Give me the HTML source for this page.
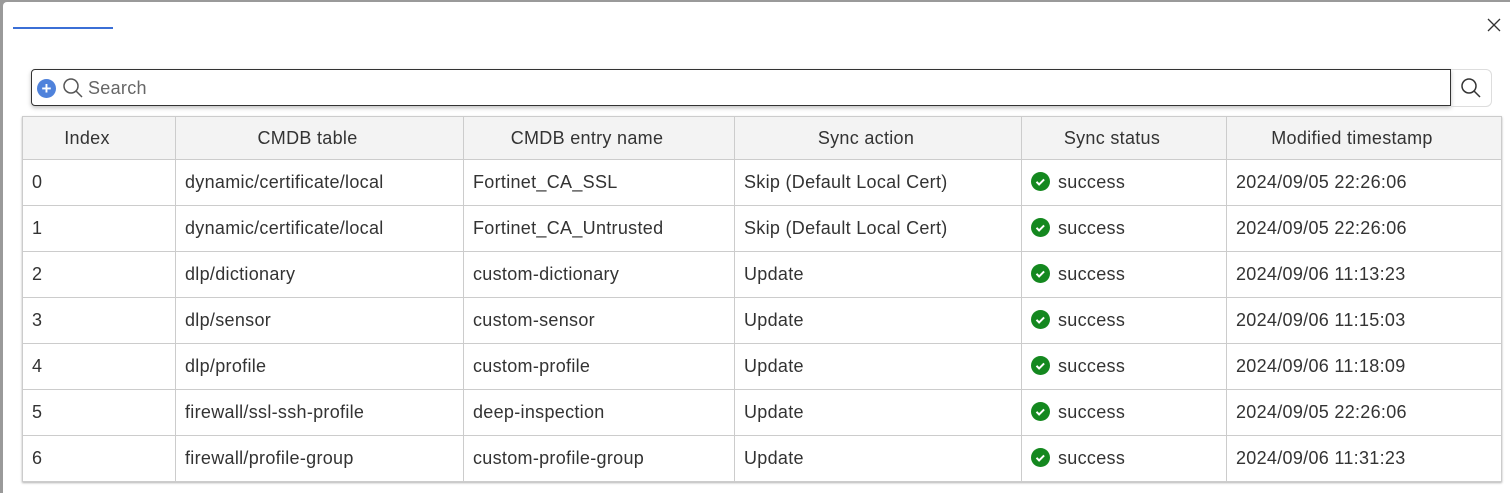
<!DOCTYPE html>
<html><head><style>
body{margin:0;width:1510px;height:493px;background:#9a9a9a;font-family:"Liberation Sans",sans-serif;overflow:hidden;position:relative}
.dlg{position:absolute;left:3px;top:2px;width:1507px;height:491px;background:#fff;border-top-left-radius:4px}
.tab{position:absolute;left:10px;top:25px;width:100px;height:2px;background:#3b6fd6}
.search{position:absolute;left:31px;top:69px;width:1418px;height:35px;border:1px solid #333;border-radius:4px 0 0 4px;box-shadow:0 2px 4px rgba(0,0,0,.25);background:#fff}
.plus{position:absolute;left:5px;top:9px;width:19px;height:19px;border-radius:50%;background:#4f82db;color:#fff;font-size:17px;line-height:19px;text-align:center;font-weight:bold}
.ph{position:absolute;left:56px;top:8px;font-size:18px;letter-spacing:.3px;color:#666}
.btn{position:absolute;left:1451px;top:69px;width:40px;height:36px;border:1px solid #ddd;border-left:none;border-radius:0 6px 6px 0}
table{position:absolute;left:22px;top:116px;border-collapse:collapse;font-size:18px;letter-spacing:.3px;color:#333;box-shadow:0 1px 2px rgba(0,0,0,.3);table-layout:fixed}
td,th{border:1px solid #ccc;padding:0 0 0 9px;text-align:left;font-weight:normal;height:45px;white-space:nowrap}
th{text-align:center;padding:0 24px 0 0;background:#f3f3f3;height:42px}
tr.b td{border-top:1px solid #999}
.ok{display:inline-block;width:19px;height:19px;border-radius:50%;background:#14881f;vertical-align:-3px;margin-right:8px;position:relative}
</style></head><body>
<div class="dlg">
<div class="tab"></div>
<svg style="position:absolute;left:1484px;top:16px" width="14" height="14"><path d="M1 1L13 13M13 1L1 13" stroke="#333" stroke-width="1.3"/></svg>
</div>
<div class="search"><div class="plus">+</div>
<svg style="position:absolute;left:30px;top:7px" width="22" height="22" viewBox="0 0 22 22"><circle cx="9" cy="9" r="7" fill="none" stroke="#555" stroke-width="1.5"/><line x1="14" y1="14" x2="20" y2="20" stroke="#555" stroke-width="1.5"/></svg>
<div class="ph">Search</div></div>
<div class="btn"><svg style="position:absolute;left:9px;top:7px" width="22" height="22" viewBox="0 0 22 22"><circle cx="9" cy="9" r="7" fill="none" stroke="#333" stroke-width="1.5"/><line x1="14" y1="14" x2="20" y2="20" stroke="#333" stroke-width="1.5"/></svg></div>
<table>
<colgroup><col style="width:153px"><col style="width:288px"><col style="width:271px"><col style="width:287px"><col style="width:205px"><col style="width:275px"></colgroup>
<tr><th>Index</th><th>CMDB table</th><th>CMDB entry name</th><th>Sync action</th><th>Sync status</th><th>Modified timestamp</th></tr>
<tr><td>0</td><td>dynamic/certificate/local</td><td>Fortinet_CA_SSL</td><td>Skip (Default Local Cert)</td><td><span class="ok"><svg width="19" height="19"><path d="M5.5 9.8l2.6 2.6 5-5" fill="none" stroke="#fff" stroke-width="2"/></svg></span>success</td><td>2024/09/05 22:26:06</td></tr>
<tr><td>1</td><td>dynamic/certificate/local</td><td>Fortinet_CA_Untrusted</td><td>Skip (Default Local Cert)</td><td><span class="ok"><svg width="19" height="19"><path d="M5.5 9.8l2.6 2.6 5-5" fill="none" stroke="#fff" stroke-width="2"/></svg></span>success</td><td>2024/09/05 22:26:06</td></tr>
<tr><td>2</td><td>dlp/dictionary</td><td>custom-dictionary</td><td>Update</td><td><span class="ok"><svg width="19" height="19"><path d="M5.5 9.8l2.6 2.6 5-5" fill="none" stroke="#fff" stroke-width="2"/></svg></span>success</td><td>2024/09/06 11:13:23</td></tr>
<tr><td>3</td><td>dlp/sensor</td><td>custom-sensor</td><td>Update</td><td><span class="ok"><svg width="19" height="19"><path d="M5.5 9.8l2.6 2.6 5-5" fill="none" stroke="#fff" stroke-width="2"/></svg></span>success</td><td>2024/09/06 11:15:03</td></tr>
<tr><td>4</td><td>dlp/profile</td><td>custom-profile</td><td>Update</td><td><span class="ok"><svg width="19" height="19"><path d="M5.5 9.8l2.6 2.6 5-5" fill="none" stroke="#fff" stroke-width="2"/></svg></span>success</td><td>2024/09/06 11:18:09</td></tr>
<tr><td>5</td><td>firewall/ssl-ssh-profile</td><td>deep-inspection</td><td>Update</td><td><span class="ok"><svg width="19" height="19"><path d="M5.5 9.8l2.6 2.6 5-5" fill="none" stroke="#fff" stroke-width="2"/></svg></span>success</td><td>2024/09/05 22:26:06</td></tr>
<tr class="b"><td>6</td><td>firewall/profile-group</td><td>custom-profile-group</td><td>Update</td><td><span class="ok"><svg width="19" height="19"><path d="M5.5 9.8l2.6 2.6 5-5" fill="none" stroke="#fff" stroke-width="2"/></svg></span>success</td><td>2024/09/06 11:31:23</td></tr>
</table>
</body></html>
